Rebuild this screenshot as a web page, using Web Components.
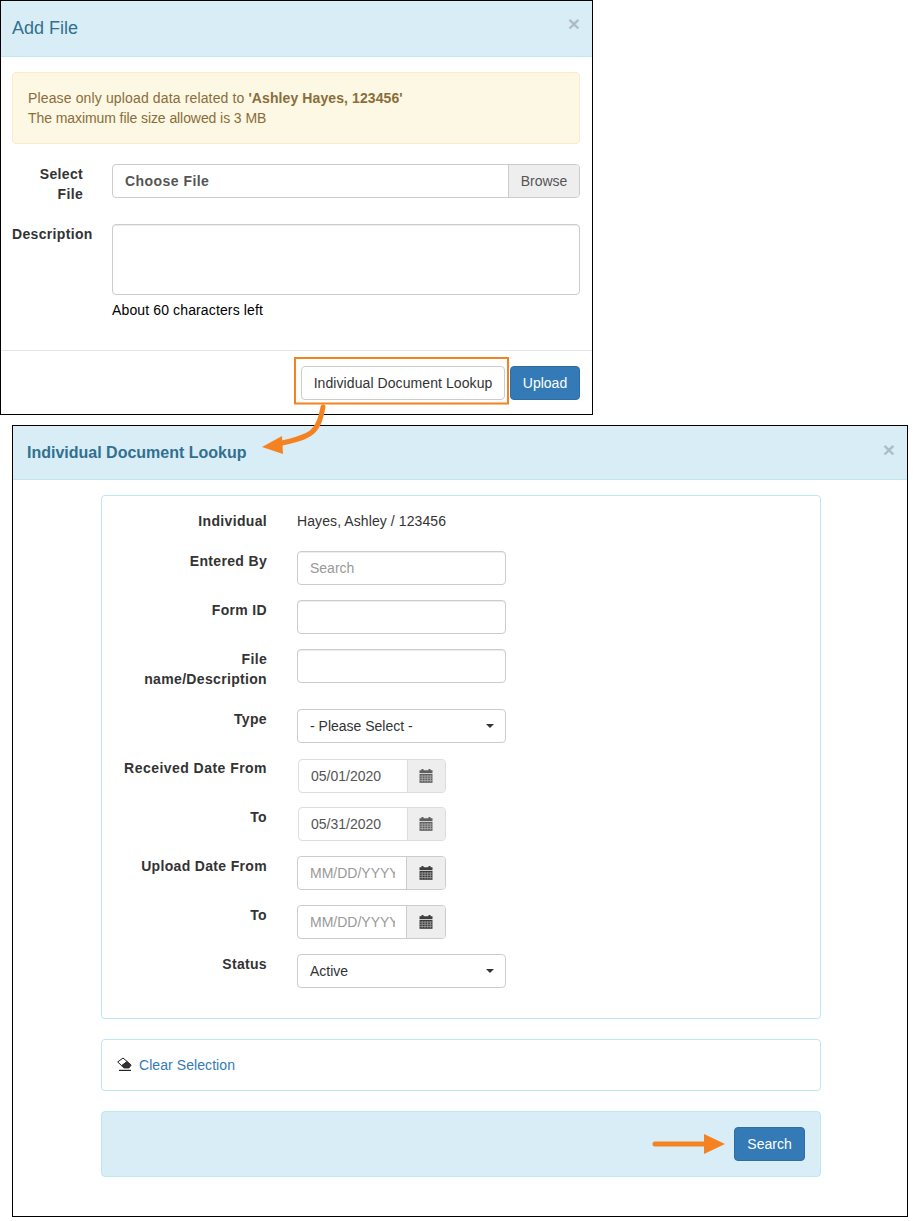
<!DOCTYPE html>
<html lang="en">
<head>
<meta charset="utf-8">
<title>Add File</title>
<style>
  html, body { margin: 0; background: #fff; }
  body { font: 14px/20px "Liberation Sans", Arial, sans-serif; color: #333; position: relative; width: 913px; height: 1221px; overflow: hidden; }
</style>
</head>
<body>

<x-modal heading="Add File" style="width:593px; --head-h:55px; --head-size:18px; --head-left:11px; --head-right:12px; --close-shift:-5px; --title-shift:-1px;">
  <div style="padding:15px 12px 30px 11px">
    <x-alert style="margin-bottom:20px">
      <span style="letter-spacing:.14px">Please only upload data related to</span> <b style="letter-spacing:.1px">'Ashley Hayes, 123456'</b><br><span style="letter-spacing:-.08px">The maximum file size allowed is 3 MB</span>
    </x-alert>
    <x-row label="Select File" style="--label-w:71px; --row-gap:29px; margin-bottom:20px">
      <x-file style="width:468px"></x-file>
    </x-row>
    <x-row label="Description" style="--label-w:71px; --row-gap:29px; margin-bottom:5px">
      <x-field style="width:468px; height:71px"></x-field>
    </x-row>
    <div style="margin-left:100px; color:#000; letter-spacing:.13px">About 60 characters left</div>
  </div>
  <div style="border-top:1px solid #e5e5e5; padding:15px 12px 14px; display:flex; justify-content:flex-end; gap:5px">
    <x-button style="width:204px; letter-spacing:.08px">Individual Document Lookup</x-button>
    <x-button kind="primary" style="width:70px">Upload</x-button>
  </div>
</x-modal>

<x-modal heading="Individual Document Lookup" style="width:896px; margin:10px 0 0 12px; --head-h:53px; --head-size:16px; --head-weight:bold; --head-left:14px; --head-right:12px; --close-shift:-3px;">
  <div style="padding:15px 86px 39px 88px">
    <x-panel style="margin-bottom:20px; padding-bottom:30px">
      <x-row label="Individual" style="margin-bottom:20px"><span style="letter-spacing:.09px">Hayes, Ashley / 123456</span></x-row>
      <x-row label="Entered By"><x-field placeholder="Search" style="width:209px"></x-field></x-row>
      <x-row label="Form ID"><x-field style="width:209px"></x-field></x-row>
      <x-row label="File name/Description" style="margin-bottom:20px"><x-field style="width:209px"></x-field></x-row>
      <x-row label="Type"><x-select style="width:209px">- Please Select -</x-select></x-row>
      <x-row label="Received Date From" style="margin-bottom:14px; --label-track:.46px"><x-date value="05/01/2020" style="margin:1px 0 0 1px"></x-date></x-row>
      <x-row label="To"><x-date value="05/31/2020" style="margin-left:1px"></x-date></x-row>
      <x-row label="Upload Date From"><x-date></x-date></x-row>
      <x-row label="To"><x-date></x-date></x-row>
      <x-row label="Status" style="margin-bottom:0"><x-select style="width:209px">Active</x-select></x-row>
    </x-panel>
    <x-panel style="margin-bottom:20px">
      <div style="display:flex; align-items:center; gap:7px">
        <svg width="15" height="15" viewBox="0 0 15 15" style="margin-top:-1px; flex:none">
          <path d="M.7 5 6 1 10.200 4.500 4.700 8.700Z" fill="#fff" stroke="#222" stroke-linejoin="round"/>
          <path d="M10.200 4.500 14.200 8 12 11H7L4.700 8.700Z" fill="#333" stroke="#222" stroke-width=".8" stroke-linejoin="round"/>
          <rect x="2" y="12.800" width="12" height="1.200" fill="#222"/>
        </svg>
        <span style="color:#337ab7; letter-spacing:.07px">Clear Selection</span>
      </div>
    </x-panel>
    <x-panel tint style="display:block">
      <div style="display:flex; justify-content:flex-end">
        <x-button kind="primary" style="width:71px">Search</x-button>
      </div>
    </x-panel>
  </div>
</x-modal>

<x-callouts></x-callouts>

<template id="modal-tpl">
  <style>
    :host { display: block; box-sizing: border-box; border: 1px solid #000; background: #fff; }
    header {
      box-sizing: content-box; height: var(--head-h); display: flex; align-items: center; justify-content: space-between;
      padding: 0 var(--head-right) 0 var(--head-left);
      background: #d9edf7; border-bottom: 1px solid #bce8f1;
    }
    h4 { margin: 0; font-size: var(--head-size); font-weight: var(--head-weight, normal); line-height: 20px; color: #31708f; transform: translateY(var(--title-shift, 0)); }
    .close { font-size: 21px; font-weight: bold; line-height: 1; color: #000; opacity: .2; transform: translateY(var(--close-shift)); }
  </style>
  <header><h4></h4><span class="close">×</span></header>
  <slot></slot>
</template>

<template id="alert-tpl">
  <style>
    :host { display: block; padding: 15px; border: 1px solid #faebcc; border-radius: 4px; background: #fcf8e3; color: #8a6d3b; }
  </style>
  <slot></slot>
</template>

<template id="row-tpl">
  <style>
    :host { display: flex; align-items: flex-start; gap: var(--row-gap, 30px); margin-bottom: 15px; }
    label { flex: none; width: var(--label-w, 150px); text-align: right; font-weight: bold; color: #333; letter-spacing: var(--label-track, .33px); }
  </style>
  <label></label><slot></slot>
</template>

<template id="field-tpl">
  <style>
    :host { display: block; box-sizing: border-box; height: 34px; padding: 6px 12px; border: 1px solid #ccc; border-radius: 4px; background: #fff; color: #999; box-shadow: inset 0 1px 1px rgba(0,0,0,.075); }
  </style>
  <span></span>
</template>

<template id="file-tpl">
  <style>
    :host { display: flex; box-sizing: border-box; height: 34px; border: 1px solid #ccc; border-radius: 4px; overflow: hidden; background: #fff; }
    .name { flex: 1; padding: 6px 12px; font-weight: bold; color: #555; letter-spacing: .45px; }
    .browse { flex: none; width: 71px; box-sizing: border-box; padding: 6px 0; text-align: center; background: #eee; border-left: 1px solid #ccc; color: #555; }
  </style>
  <span class="name">Choose File</span><span class="browse">Browse</span>
</template>

<template id="select-tpl">
  <style>
    :host { display: flex; align-items: center; justify-content: space-between; box-sizing: border-box; height: 34px; padding: 0 12px; border: 1px solid #ccc; border-radius: 4px; background: #fff; color: #333; }
    i { width: 0; height: 0; border: 4px solid transparent; border-top-color: #333; border-bottom: 0; margin-right: -1px; }
  </style>
  <slot></slot><i></i>
</template>

<template id="date-tpl">
  <style>
    :host { display: flex; box-sizing: border-box; width: 149px; height: 34px; border: 1px solid #ccc; border-radius: 4px; overflow: hidden; background: #fff; }
    :host([value]) { width: 148px; border-color: #ddd; }
    .text { flex: 1; min-width: 0; margin: 6px 11px 6px 12px; white-space: nowrap; overflow: hidden; color: #999; }
    :host([value]) .text { color: #555; }
    .addon { flex: none; width: 39px; box-sizing: border-box; display: flex; align-items: center; justify-content: center; background: #eee; border-left: 1px solid #ccc; }
    :host([value]) .addon { width: 38px; border-left-color: #ddd; }
    svg { margin-right: 1px; }
    :host([value]) svg { opacity: .8; }
    .cells { stroke: #eee; stroke-width: .7; opacity: .6; }
  </style>
  <span class="text"></span>
  <span class="addon">
    <svg width="14" height="14" viewBox="0 0 14 14" fill="#3d3d3d">
      <path d="M2.500 0h2v1.300h5V0h2v1.300H13.500V4H.5V1.300H2.500Z"/>
      <rect x=".5" y="4.800" width="13" height="9"/>
      <path class="cells" d="M.5 7.100h13M.5 9.300h13M.5 11.500h13M3.200 6v7M6 6v7M8.700 6v7M11.300 6v7"/>
    </svg>
  </span>
</template>

<template id="button-tpl">
  <style>
    :host { display: flex; align-items: center; justify-content: center; box-sizing: border-box; height: 34px; border: 1px solid #ccc; border-radius: 4px; background: #fff; color: #333; white-space: nowrap; }
    :host([kind="primary"]) { background: #337ab7; border-color: #2e6da4; color: #fff; }
  </style>
  <slot></slot>
</template>

<template id="panel-tpl">
  <style>
    :host { display: block; padding: 15px; border: 1px solid #bce8f1; border-radius: 4px; background: #fff; }
    :host([tint]) { background: #d9edf7; }
  </style>
  <slot></slot>
</template>

<template id="callouts-tpl">
  <style>
    :host { position: absolute; left: 0; top: 0; width: 913px; height: 1221px; pointer-events: none; }
    svg { display: block; }
  </style>
  <svg width="913" height="1221" viewBox="0 0 913 1221" fill="none">
    <rect x="295" y="358" width="213" height="45.500" stroke="#f58220" stroke-width="2"/>
    <path d="M323 407C321 417 319 426 312 432 305 438 292 441 278 444" stroke="#f58220" stroke-width="5" stroke-linecap="round"/>
    <path d="M262 447 282 436 283 454Z" fill="#f58220"/>
    <path d="M655 1144H706" stroke="#f58220" stroke-width="5" stroke-linecap="round"/>
    <path d="M704 1134 725 1144 704 1154Z" fill="#f58220"/>
  </svg>
</template>

<script>
  // every element clones its template into an open shadow root
  function stamp(el, id) {
    el.attachShadow({ mode: "open" }).appendChild(document.getElementById(id).content.cloneNode(true));
    return el.shadowRoot;
  }

  class XModal extends HTMLElement {
    connectedCallback() {
      stamp(this, "modal-tpl").querySelector("h4").textContent = this.getAttribute("heading");
    }
  }

  class XRow extends HTMLElement {
    connectedCallback() {
      stamp(this, "row-tpl").querySelector("label").textContent = this.getAttribute("label");
    }
  }

  class XField extends HTMLElement {
    connectedCallback() {
      stamp(this, "field-tpl").querySelector("span").textContent = this.getAttribute("placeholder") || "";
    }
  }

  class XDate extends HTMLElement {
    connectedCallback() {
      stamp(this, "date-tpl").querySelector(".text").textContent = this.getAttribute("value") || "MM/DD/YYYY";
    }
  }

  // the ones that only need their template
  const plain = { "x-alert": "alert-tpl", "x-file": "file-tpl", "x-select": "select-tpl", "x-button": "button-tpl", "x-panel": "panel-tpl", "x-callouts": "callouts-tpl" };
  for (const tag in plain) {
    customElements.define(tag, class extends HTMLElement {
      connectedCallback() { stamp(this, plain[tag]); }
    });
  }

  customElements.define("x-modal", XModal);
  customElements.define("x-row", XRow);
  customElements.define("x-field", XField);
  customElements.define("x-date", XDate);
</script>
</body>
</html>
